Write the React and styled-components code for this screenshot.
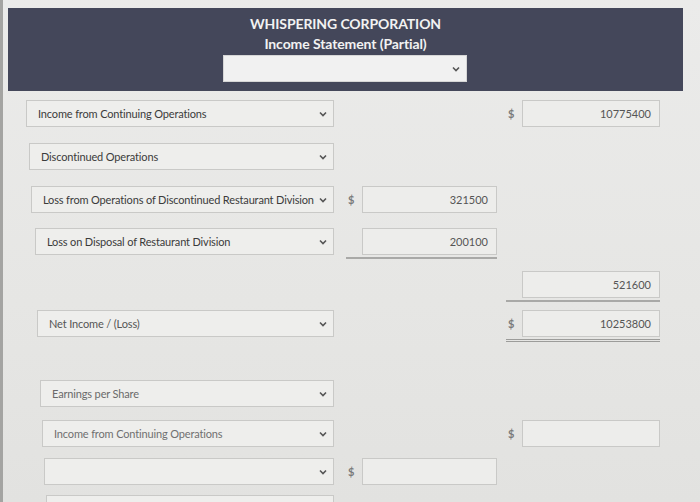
import React from "react";
import styled, { createGlobalStyle } from "styled-components";

const Global = createGlobalStyle`
  html, body { margin: 0; padding: 0; }
  body {
    background: #e7e7e5;
    font-family: Lato, "Open Sans", sans-serif;
    width: 700px;
    height: 502px;
    overflow: hidden;
  }
`;

const Page = styled.div`
  box-sizing: border-box;
  width: 700px;
  height: 502px;
  padding: 8px 17px 0 8px;
  border-left: 3px solid #a4a4a2;
  background: linear-gradient(180deg, #ebebea 0%, #e6e6e4 60%, #e2e2e0 100%);
  overflow: hidden;
`;

const Header = styled.header`
  background: #44475a;
  margin-left: -3px;
  padding: 6px 0 9px;
  display: flex;
  flex-direction: column;
  align-items: center;
`;

const Title = styled.div`
  color: #f2f2f2;
  font-weight: 700;
  font-size: 14px;
  line-height: 20px;
  letter-spacing: -0.1px;
`;

const HeaderSelect = styled.div`
  margin-top: 1px;
  margin-left: -2px;
  width: 244px;
  height: 27px;
  box-sizing: border-box;
  background: #f1f1f1;
  border: 1px solid #d6d6d6;
  display: flex;
  align-items: center;
  justify-content: flex-end;
  padding-right: 6px;
`;

const Body = styled.div`
  display: flex;
  flex-direction: column;
`;

const Row = styled.div`
  display: flex;
  align-items: flex-start;
  margin-top: ${(p) => p.$space}px;
  padding-left: ${(p) => p.$indent}px;
`;

const SelectBox = styled.div`
  box-sizing: border-box;
  width: ${(p) => 323 - p.$indent}px;
  flex: none;
  height: 27px;
  background: #eeeeec;
  border: 1px solid #c9c9c7;
  display: flex;
  align-items: center;
  justify-content: space-between;
  padding: 0 6px 0 11px;
  font-size: 11px;
  letter-spacing: -0.15px;
  color: ${(p) => p.$tone};
  white-space: nowrap;
`;

const Blank = styled.div`
  width: ${(p) => p.$w}px;
  flex: none;
`;

const Cell = styled.div`
  box-sizing: border-box;
  width: ${(p) => p.$w}px;
  flex: none;
  display: flex;
  align-items: center;
  padding-bottom: ${(p) => (p.$line ? 2 : 0)}px;
  border-bottom: ${(p) =>
    p.$line === "double" ? "3px double #9c9c9a" : p.$line ? "2px solid #a9a9a7" : "none"};
`;

const Dollar = styled.span`
  width: 16px;
  flex: none;
  font-size: 11px;
  font-weight: 700;
  color: #7a7a7a;
  padding-left: 2px;
  box-sizing: border-box;
`;

const Input = styled.div`
  box-sizing: border-box;
  flex: 1;
  height: 27px;
  background: #ededeb;
  border: 1px solid #c9c9c7;
  display: flex;
  align-items: center;
  justify-content: flex-end;
  padding-right: 8px;
  font-size: 11px;
  color: #555;
`;

const Chevron = () => (
  <svg width="8" height="6" viewBox="0 0 8 6">
    <polyline points="1,1.5 4,4.5 7,1.5" fill="none" stroke="#555" strokeWidth="1.6" />
  </svg>
);

const Select = ({ label, indent, tone = "#3b3b3b" }) => (
  <SelectBox $indent={indent} $tone={tone}>
    <span>{label}</span>
    <Chevron />
  </SelectBox>
);

const MID_W = 151;
const RIGHT_W = 154;

const Amount = ({ dollar, value, line, w }) => (
  <Cell $line={line} $w={w}>
    <Dollar>{dollar ? "$" : ""}</Dollar>
    <Input>{value}</Input>
  </Cell>
);

const rows = [
  { space: 9, indent: 15, label: "Income from Continuing Operations", right: { dollar: true, value: "10775400" } },
  { space: 16, indent: 18, label: "Discontinued Operations" },
  { space: 16, indent: 20, label: "Loss from Operations of Discontinued Restaurant Division", mid: { dollar: true, value: "321500" } },
  { space: 15, indent: 24, label: "Loss on Disposal of Restaurant Division", mid: { value: "200100", line: "single" } },
  { space: 12, noSelect: true, right: { value: "521600", line: "single" } },
  { space: 8, indent: 26, label: "Net Income / (Loss)", tone: "#555", right: { dollar: true, value: "10253800", line: "double" } },
  { space: 38, indent: 29, label: "Earnings per Share", tone: "#6a6a6a" },
  { space: 13, indent: 31, label: "Income from Continuing Operations", tone: "#707070", right: { dollar: true, value: "" } },
  { space: 11, indent: 33, label: "", mid: { dollar: true, value: "" } },
  { space: 10, indent: 35, label: "" },
];

export default function App() {
  return (
    <>
      <Global />
      <Page>
        <Header>
          <Title>WHISPERING CORPORATION</Title>
          <Title>Income Statement (Partial)</Title>
          <HeaderSelect>
            <Chevron />
          </HeaderSelect>
        </Header>
        <Body>
          {rows.map((r, i) => (
            <Row key={i} $space={r.space} $indent={r.noSelect ? 0 : r.indent}>
              {r.noSelect ? (
                <Blank $w={323} />
              ) : (
                <Select label={r.label} indent={r.indent} tone={r.tone} />
              )}
              <Blank $w={12} />
              {r.mid ? <Amount {...r.mid} w={MID_W} /> : <Blank $w={MID_W} />}
              <Blank $w={9} />
              {r.right ? <Amount {...r.right} w={RIGHT_W} /> : <Blank $w={RIGHT_W} />}
            </Row>
          ))}
        </Body>
      </Page>
    </>
  );
}
